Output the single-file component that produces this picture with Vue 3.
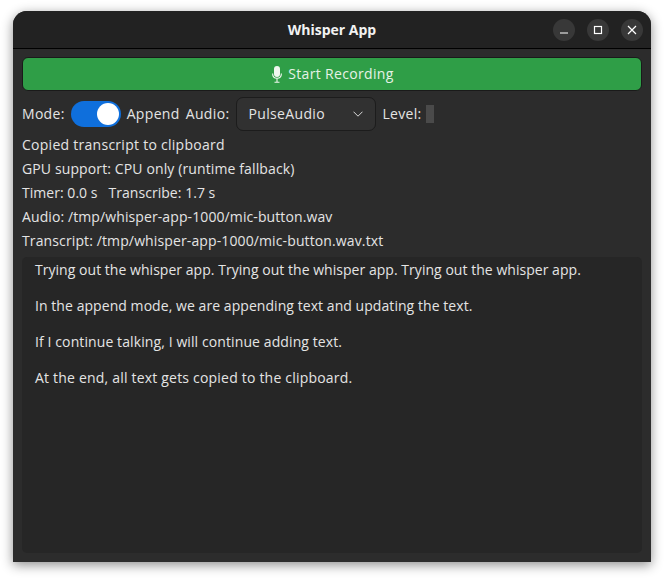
<script setup>
const statusLines = [
  { text: 'Copied transcript to clipboard', cls: 'ls-27' },
  { text: 'GPU support: CPU only (runtime fallback)', cls: 'ls-12' },
  { text: 'Timer: 0.0 s \u00a0 Transcribe: 1.7 s', cls: 'ls-3' },
  { text: 'Audio: /tmp/whisper-app-1000/mic-button.wav', cls: 'ls-10' },
  { text: 'Transcript: /tmp/whisper-app-1000/mic-button.wav.txt', cls: 'ls-12' },
]
const paragraphs = [
  { text: 'Trying out the whisper app. Trying out the whisper app. Trying out the whisper app.', cls: 'ls-3' },
  { text: 'In the append mode, we are appending text and updating the text.', cls: 'ls-6' },
  { text: 'If I continue talking, I will continue adding text.', cls: 'ls-10' },
  { text: 'At the end, all text gets copied to the clipboard.', cls: 'ls-20' },
]
</script>

<template>
  <div class="page">
    <div class="window">
      <header class="titlebar">
        <span class="spacer"></span>
        <span class="title">Whisper App</span>
        <div class="controls">
          <span class="ctl">
            <svg width="16" height="16" viewBox="0 0 16 16"><path d="M4 11h8" stroke="#fff" stroke-width="1.200" fill="none"/></svg>
          </span>
          <span class="ctl">
            <svg width="16" height="16" viewBox="0 0 16 16"><rect x="4.500" y="4.500" width="7" height="7" stroke="#fff" stroke-width="1.200" fill="none"/></svg>
          </span>
          <span class="ctl">
            <svg width="16" height="16" viewBox="0 0 16 16"><path d="M4 4l8 8M12 4l-8 8" stroke="#fff" stroke-width="1.200" fill="none"/></svg>
          </span>
        </div>
      </header>
      <main class="content">
        <button class="record">
          <svg width="10" height="17" viewBox="0 0 10 17">
            <rect x="2" y="0" width="6" height="11" rx="3" fill="#f0f7f0"/>
            <path d="M0.600 7.500c0 3 1.800 4.800 4.400 4.800s4.400-1.800 4.400-4.800M5 12.300v3.700M2.500 16.300h5" stroke="#f0f7f0" stroke-width="1.100" fill="none"/>
          </svg>
          <span class="record-label">Start Recording</span>
        </button>
        <div class="options">
          <span class="opt-mode">Mode:</span>
          <span class="switch"><span class="knob"></span></span>
          <span class="opt-text">Append</span>
          <span class="opt-text audio-label">Audio:</span>
          <span class="select">
            <span class="opt-text">PulseAudio</span>
            <svg width="10" height="6" viewBox="0 0 10 6"><path d="M0.500 0.700L5 5.200L9.500 0.700" stroke="#d8d8d8" stroke-width="1" fill="none"/></svg>
          </span>
          <span class="opt-mode level-label">Level:</span>
          <span class="level"></span>
        </div>
        <div class="status">
          <div v-for="line in statusLines" :key="line.text" class="status-line" :class="line.cls">{{ line.text }}</div>
        </div>
        <div class="transcript">
          <p v-for="p in paragraphs" :key="p.text" :class="p.cls">{{ p.text }}</p>
        </div>
      </main>
    </div>
  </div>
</template>

<style>
html, body { margin: 0; background: #fff; }
</style>

<style scoped>
.page {
  width: 664px;
  height: 578px;
  box-sizing: border-box;
  padding: 11px 13px 16px;
  font-family: "Open Sans", "Noto Sans", sans-serif;
  font-size: 14px;
  color: #e4e4e4;
}
.window {
  height: 100%;
  display: flex;
  flex-direction: column;
  background: #2c2c2c;
  border-radius: 14px 14px 0 0;
  box-shadow: 0 3px 12px rgba(0, 0, 0, 0.45);
  overflow: hidden;
}
.titlebar {
  height: 37px;
  flex: none;
  display: flex;
  align-items: center;
  justify-content: space-between;
  padding: 0 8px 0 0;
  background: #222;
  border-bottom: 1px solid #000;
}
.spacer { width: 98px; }
.title { color: #f2f2f2; font-weight: 700; font-size: 14px; }
.controls { display: flex; gap: 12px; }
.ctl {
  width: 22px;
  height: 22px;
  border-radius: 50%;
  background: #383838;
  display: flex;
  align-items: center;
  justify-content: center;
}
.content {
  flex: 1;
  display: flex;
  flex-direction: column;
  padding: 8px 9px 9px;
  min-height: 0;
}
.record {
  height: 34px;
  flex: none;
  display: flex;
  align-items: center;
  justify-content: center;
  gap: 6px;
  padding: 0 0 0 2px;
  font: inherit;
  color: #e6f2e6;
  background: #2f9e47;
  border: 1px solid #1a1a1a;
  border-radius: 6px;
}
.record-label { letter-spacing: 0.33px; margin-bottom: 1px; }
.options {
  display: flex;
  align-items: center;
  height: 34px;
  margin-top: 6px;
  flex: none;
}
.opt-mode { letter-spacing: 0.3px; margin-bottom: 1px; }
.opt-text { letter-spacing: 0.35px; margin-bottom: 1px; }
.switch {
  width: 50px;
  height: 26px;
  margin-left: 6px;
  margin-right: 6px;
  border-radius: 13px;
  background: #0f6fdc;
  display: flex;
  justify-content: flex-end;
  align-items: center;
  padding: 0 2px;
  box-sizing: border-box;
}
.knob { width: 22px; height: 22px; border-radius: 50%; background: #fff; }
.audio-label { margin-left: 6px; }
.select {
  width: 140px;
  height: 34px;
  margin-left: 7px;
  box-sizing: border-box;
  display: flex;
  align-items: center;
  justify-content: space-between;
  padding: 0 12px 0 11px;
  background: #313131;
  border: 1px solid #1c1c1c;
  border-radius: 7px;
}
.level-label { margin-left: 6px; }
.level { width: 8px; height: 18px; margin-left: 4px; background: #4a4a4a; }
.status { margin-top: 2px; flex: none; }
.status-line { height: 24px; line-height: 24px; }
.transcript {
  flex: 1;
  margin-top: 4px;
  background: #262626;
  border-radius: 5px;
  padding: 4px 13px;
}
.transcript p { margin: 0 0 18px; line-height: 18px; }
.ls-3 { letter-spacing: 0.036px; }
.ls-6 { letter-spacing: 0.06px; }
.ls-10 { letter-spacing: 0.1px; }
.ls-12 { letter-spacing: 0.12px; }
.ls-20 { letter-spacing: 0.2px; }
.ls-27 { letter-spacing: 0.27px; }
</style>
